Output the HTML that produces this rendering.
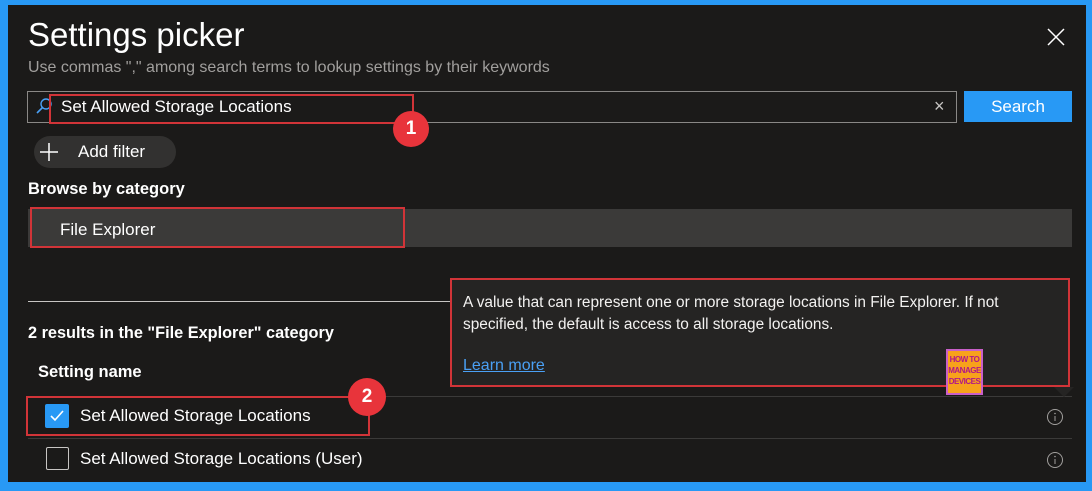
<!DOCTYPE html>
<html><head><style>
*{margin:0;padding:0;box-sizing:border-box}
body{width:1092px;height:491px;background:#2899f5;font-family:"Segoe UI","Liberation Sans",sans-serif;overflow:hidden;position:relative}
.p{position:absolute;left:8px;top:5px;width:1078px;height:477px;background:#1b1a19}
.a{position:absolute;color:#fff;white-space:nowrap}
</style></head><body>
<div class="p"></div>
<div class="a" style="left:28px;top:16px;font-size:33px;">Settings picker</div>
<div class="a" style="left:28px;top:59px;font-size:16px;color:#a19f9d">Use commas "," among search terms to lookup settings by their keywords</div>
<div style="position:absolute;left:27px;top:91px;width:930px;height:32px;border:1px solid #8a8886"></div>
<svg style="position:absolute;left:35px;top:97px" width="18" height="18"><circle cx="11" cy="7" r="5" stroke="#4aa0f5" stroke-width="1.4" fill="none"/><line x1="7.5" y1="10.5" x2="2" y2="16" stroke="#4aa0f5" stroke-width="1.6"/></svg>
<div style="position:absolute;left:49px;top:94px;width:365px;height:30px;border:2px solid #d13438"></div>
<div class="a" style="left:61px;top:97px;font-size:17px">Set Allowed Storage Locations</div>
<div class="a" style="left:934px;top:96px;font-size:18px;color:#c8c6c4">×</div>
<div style="position:absolute;left:964px;top:91px;width:108px;height:31px;background:#2899f5;color:#fff;font-size:17px;text-align:center;line-height:31px">Search</div>
<div style="position:absolute;left:393px;top:111px;width:36px;height:36px;border-radius:50%;background:#e8343b;color:#fff;font-weight:bold;font-size:19px;text-align:center;line-height:36px;font-family:'Liberation Sans',sans-serif">1</div>
<div style="position:absolute;left:34px;top:136px;width:142px;height:32px;border-radius:16px;background:#323130"></div>
<svg style="position:absolute;left:40px;top:143px" width="18" height="18"><path d="M9 0V18M0 9H18" stroke="#fff" stroke-width="1.5"/></svg>
<div class="a" style="left:78px;top:142px;font-size:17px">Add filter</div>
<div class="a" style="left:28px;top:180px;font-size:16.5px;font-weight:bold">Browse by category</div>
<div style="position:absolute;left:28px;top:209px;width:1044px;height:38px;background:#3b3a39"></div>
<div style="position:absolute;left:30px;top:207px;width:375px;height:41px;border:2px solid #d13438"></div>
<div class="a" style="left:60px;top:220px;font-size:17px">File Explorer</div>
<div style="position:absolute;left:28px;top:301px;width:430px;height:1px;background:#c8c6c4"></div>
<div class="a" style="left:28px;top:324px;font-size:16.3px;font-weight:bold">2 results in the "File Explorer" category</div>
<div class="a" style="left:38px;top:363px;font-size:16.5px;font-weight:bold">Setting name</div>
<div style="position:absolute;left:28px;top:396px;width:1044px;height:1px;background:#3b3a39"></div>
<div style="position:absolute;left:28px;top:438px;width:1044px;height:1px;background:#3b3a39"></div>
<div style="position:absolute;left:45px;top:404px;width:24px;height:24px;background:#2899f5;border-radius:2px"></div>
<svg style="position:absolute;left:45px;top:404px" width="24" height="24"><path d="M6 12l4 4 8-9" stroke="#fff" stroke-width="1.6" fill="none"/></svg>
<div style="position:absolute;left:26px;top:396px;width:344px;height:40px;border:2px solid #d13438"></div>
<div class="a" style="left:80px;top:406px;font-size:17px">Set Allowed Storage Locations</div>
<div style="position:absolute;left:46px;top:447px;width:23px;height:23px;border:1px solid #c8c6c4;border-radius:2px"></div>
<div class="a" style="left:80px;top:449px;font-size:17px">Set Allowed Storage Locations (User)</div>
<div style="position:absolute;left:348px;top:378px;width:38px;height:38px;border-radius:50%;background:#e8343b;color:#fff;font-weight:bold;font-size:19px;text-align:center;line-height:38px;font-family:'Liberation Sans',sans-serif">2</div>
<div style="position:absolute;left:450px;top:278px;width:620px;height:109px;background:#252423;border:2px solid #d13438"></div>
<div style="position:absolute;left:1054px;top:387px;width:0;height:0;border-left:10px solid transparent;border-right:10px solid transparent;border-top:10px solid #252423"></div>
<div class="a" style="left:463px;top:292px;font-size:15.4px;line-height:22px;color:#f3f2f1">A value that can represent one or more storage locations in File Explorer. If not<br>specified, the default is access to all storage locations.</div>
<div class="a" style="left:463px;top:357px;font-size:16px;color:#4aa0f5;text-decoration:underline">Learn more</div>
<div style="position:absolute;left:946px;top:349px;width:37px;height:46px;background:#f7a21b;border:2px solid #c85fc8;font-size:8px;color:#b0168a;font-weight:bold;text-align:center;line-height:11px;font-family:'Liberation Sans Narrow','Liberation Sans',sans-serif;padding-top:3px;letter-spacing:-0.5px">HOW TO<br>MANAGE<br>DEVICES</div>
<svg style="position:absolute;left:1046px;top:408px" width="18" height="18"><circle cx="9" cy="9" r="7.5" stroke="#a19f9d" fill="none"/><line x1="9" y1="8" x2="9" y2="13" stroke="#a19f9d"/><circle cx="9" cy="5.5" r=".8" fill="#a19f9d"/></svg>
<svg style="position:absolute;left:1046px;top:451px" width="18" height="18"><circle cx="9" cy="9" r="7.5" stroke="#a19f9d" fill="none"/><line x1="9" y1="8" x2="9" y2="13" stroke="#a19f9d"/><circle cx="9" cy="5.5" r=".8" fill="#a19f9d"/></svg>
<svg style="position:absolute;left:1047px;top:28px" width="18" height="18"><path d="M1 1L17 17M17 1L1 17" stroke="#fff" stroke-width="1.5"/></svg>
</body></html>
